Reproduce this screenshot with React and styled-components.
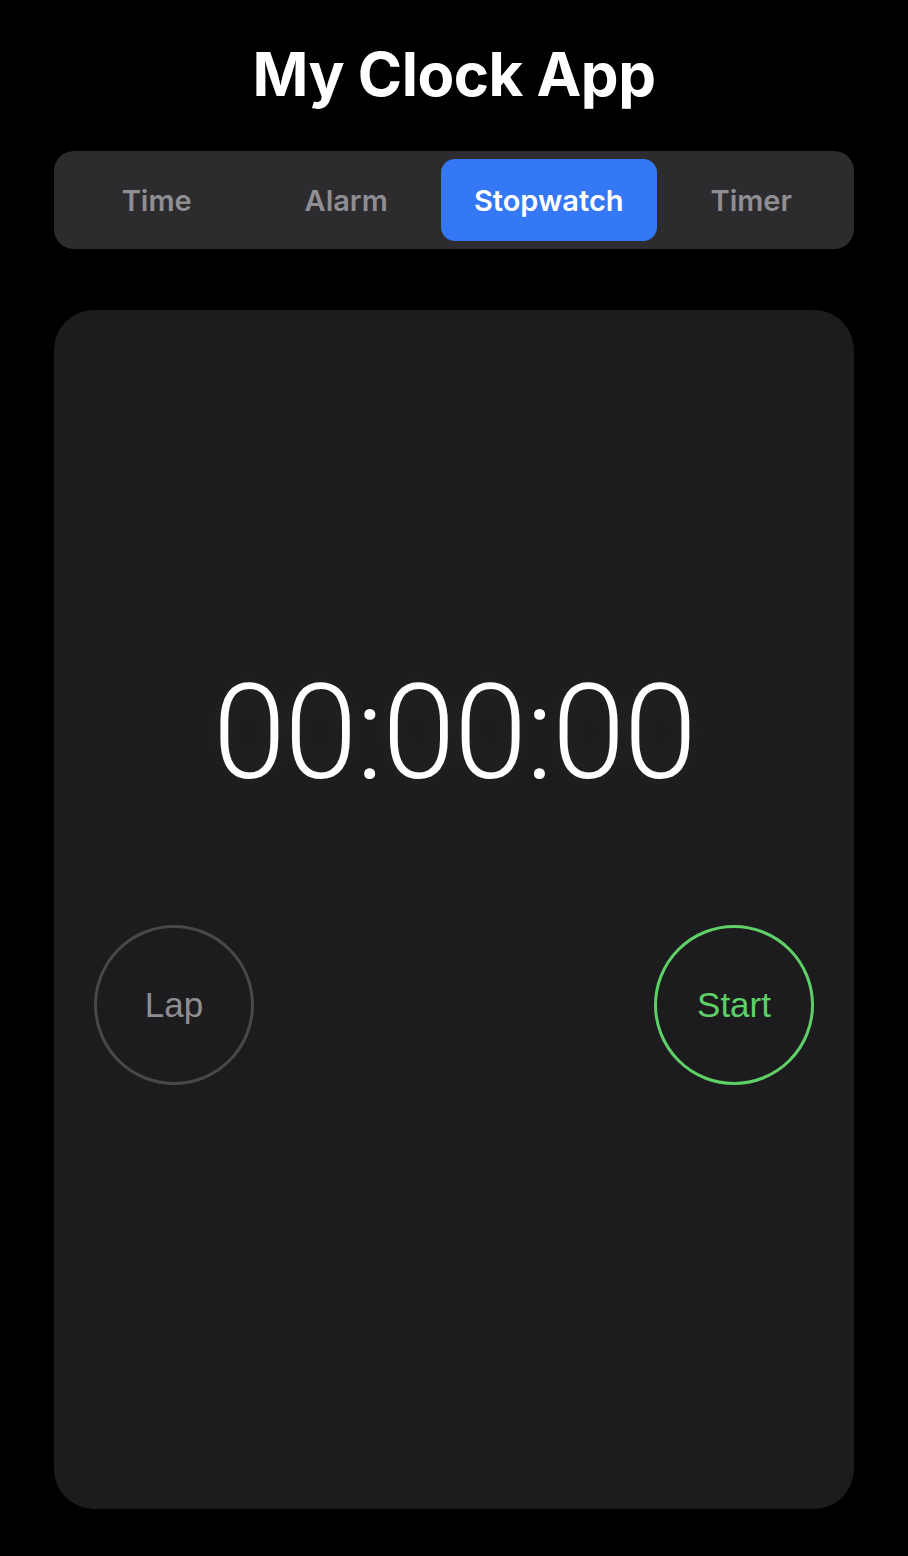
import { useState } from "react";
import styled, { createGlobalStyle } from "styled-components";

const GlobalStyle = createGlobalStyle`
  * {
    box-sizing: border-box;
  }

  body {
    margin: 0;
    background: #000;
    font-family: Inter, "Noto Sans", sans-serif;
    color: #fff;
  }
`;

const Page = styled.div`
  display: flex;
  flex-direction: column;
  align-items: center;
  min-height: 100vh;
  padding: 0 54px 47px;
`;

const Title = styled.h1`
  margin: 38px 0 41px;
  font-size: 60px;
  font-weight: 700;
  line-height: 1.2;
  letter-spacing: -0.5px;
`;

const TabBar = styled.nav`
  display: flex;
  width: 100%;
  max-width: 800px;
  padding: 8px;
  background: #2c2c2e;
  border-radius: 20px;
`;

const Tab = styled.button`
  flex: 1 1 0;
  padding: 24px 33px 22px;
  border: none;
  border-radius: 14px;
  background: ${(p) => (p.$active ? "#3478f6" : "transparent")};
  color: ${(p) => (p.$active ? "#fff" : "#8e8e93")};
  font-family: Inter, sans-serif;
  font-size: 29px;
  font-weight: 600;
  line-height: 36px;
  white-space: nowrap;
  cursor: pointer;
`;

const Card = styled.main`
  flex: 1;
  display: flex;
  flex-direction: column;
  width: 100%;
  max-width: 800px;
  margin-top: 61px;
  padding: 344px 40px 40px;
  background: #1c1c1e;
  border-radius: 40px;
`;

const Display = styled.div`
  margin-bottom: 113px;
  text-align: center;
  font-family: Roboto, "Open Sans", sans-serif;
  font-size: 132px;
  font-weight: 300;
  line-height: 1.2;
  letter-spacing: -1.5px;
  text-shadow: 0 0 30px rgba(255, 255, 255, 0.08);
`;

const Controls = styled.div`
  display: flex;
  justify-content: space-between;
`;

const RoundButton = styled.button`
  width: 160px;
  height: 160px;
  border-radius: 50%;
  border: 3px solid ${(p) => p.$ring};
  background: transparent;
  color: ${(p) => p.$color};
  font-family: "Liberation Sans", Arial, sans-serif;
  font-size: 35px;
  cursor: pointer;
`;

const tabs = ["Time", "Alarm", "Stopwatch", "Timer"];

const format = (ms) => {
  const cs = Math.floor(ms / 10) % 100;
  const s = Math.floor(ms / 1000) % 60;
  const m = Math.floor(ms / 60000);
  return [m, s, cs].map((n) => String(n).padStart(2, "0")).join(":");
};

export default function App() {
  const [active, setActive] = useState("Stopwatch");
  const [elapsed] = useState(0);

  return (
    <>
      <GlobalStyle />
      <Page>
        <Title>My Clock App</Title>
        <TabBar>
          {tabs.map((t) => (
            <Tab key={t} $active={t === active} onClick={() => setActive(t)}>
              {t}
            </Tab>
          ))}
        </TabBar>
        <Card>
          <Display>{format(elapsed)}</Display>
          <Controls>
            <RoundButton $ring="#48484a" $color="#8e8e93">
              Lap
            </RoundButton>
            <RoundButton $ring="#5fd068" $color="#5fd068">
              Start
            </RoundButton>
          </Controls>
        </Card>
      </Page>
    </>
  );
}
